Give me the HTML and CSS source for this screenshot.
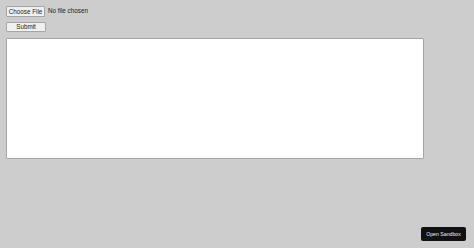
FILE: index.html
```html
<!DOCTYPE html>
<html>
<head>
<meta charset="utf-8">
<link rel="stylesheet" href="styles.css">
</head>
<body>
<div class="page">
  <div class="file-row">
    <button class="btn choose">Choose File</button>
    <span class="file-name">No file chosen</span>
  </div>
  <div class="submit-row">
    <button class="btn submit">Submit</button>
  </div>
  <textarea class="output"></textarea>
</div>
<button class="sandbox">Open Sandbox</button>
</body>
</html>
```
FILE: styles.css
```css
html, body {
  margin: 0;
  padding: 0;
  background: #cdcdcd;
  width: 474px;
  height: 248px;
  overflow: hidden;
  font-family: "Liberation Sans", Arial, sans-serif;
}
.page {
  padding: 6px 6px 0 6px;
  display: flex;
  flex-direction: column;
  align-items: flex-start;
  line-height: 1;
}
.file-row {
  display: flex;
  align-items: center;
  gap: 3px;
  height: 11px;
}
.btn {
  display: block;
  font-family: "Liberation Sans", Arial, sans-serif;
  font-size: 6.3px;
  color: #222;
  background: #f0f0f0;
  border: 1px solid #a5a5a5;
  border-radius: 1px;
  padding: 0 2px;
  margin: 0;
  height: 11px;
  line-height: 9px;
}
.choose {
  width: 39px;
  padding: 0;
}
.file-name {
  font-size: 6.3px;
  color: #222;
}
.submit-row {
  display: flex;
  margin-top: 5px;
  height: 10px;
}
.submit {
  width: 40px;
  height: 10px;
  line-height: 8px;
}
.output {
  display: block;
  margin: 6px 0 0 0;
  width: 418px;
  height: 121px;
  box-sizing: border-box;
  background: #fff;
  border: 1px solid #a5a5a5;
  border-radius: 1px;
  padding: 0;
  resize: none;
}
.sandbox {
  position: fixed;
  right: 8px;
  bottom: 7px;
  width: 45px;
  height: 14px;
  background: #111;
  color: #f0f0f0;
  border: none;
  border-radius: 2px;
  font-family: "Liberation Sans", Arial, sans-serif;
  font-size: 5.2px;
  padding: 0;
}
```
